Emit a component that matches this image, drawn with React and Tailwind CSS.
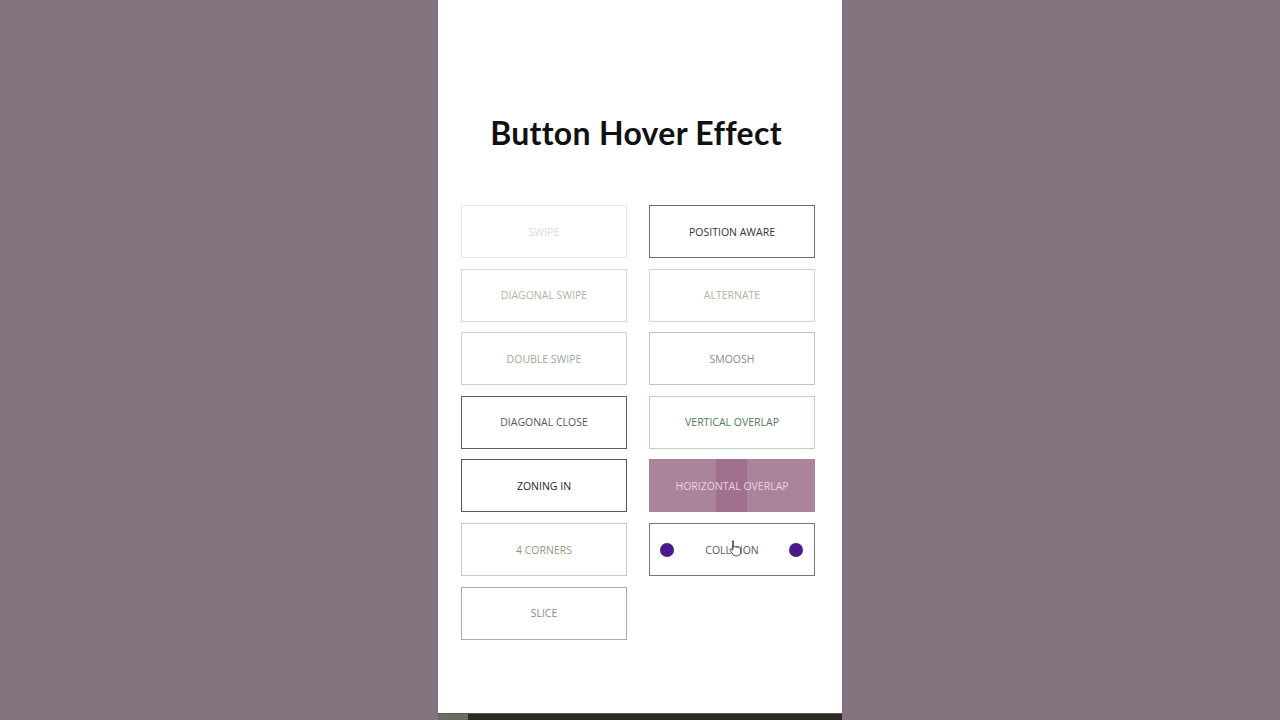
import React from "react";

const buttons = [
  { label: "SWIPE", cls: "border-[#e9e6e9] text-[#dcd8dc]" },
  { label: "POSITION AWARE", cls: "border-[#6e6e72] text-[#333336]" },
  { label: "DIAGONAL SWIPE", cls: "border-[#d6dacb] text-[#b2b3a5]" },
  { label: "ALTERNATE", cls: "border-[#d9d5c2] text-[#b7b09b]" },
  { label: "DOUBLE SWIPE", cls: "border-[#cbd6c6] text-[#9aab98]" },
  { label: "SMOOSH", cls: "border-[#bfc3c3] text-[#8a8a8a]" },
  { label: "DIAGONAL CLOSE", cls: "border-[#5a5e6a] text-[#55565f]" },
  { label: "VERTICAL OVERLAP", cls: "border-[#bcd6bc] text-[#4c7c54]" },
  { label: "ZONING IN", cls: "border-[#58585c] text-[#1e1e1e]" },
  { label: "HORIZONTAL OVERLAP", special: "overlap" },
  { label: "4 CORNERS", cls: "border-[#cbcab4] text-[#9c957a]" },
  { label: "COLLISION", special: "collision" },
  { label: "SLICE", cls: "border-[#ababab] text-[#8a8a8a]" },
];

function HandCursor() {
  return (
    <svg width="14" height="17" viewBox="0 0 14 17" className="absolute left-[78px] top-[16px]">
      <path
        d="M4 1.2c.8 0 1.3.6 1.3 1.3v5l.2-.1c.3-.6.8-.8 1.4-.8.6 0 1 .4 1.2.8.3-.4.8-.6 1.3-.5.6.1 1 .5 1.1 1 .3-.3.7-.4 1.1-.3.7.1 1.1.7 1.1 1.4v3.2c0 1.9-1.4 3.6-3.4 3.6H7.4c-1 0-1.8-.5-2.4-1.3L2.2 10.6c-.4-.5-.3-1.200.2-1.6.5-.3 1.1-.2 1.4.2l.9 1.1V2.5c0-.7.5-1.3 1.3-1.3Z"
        fill="#fff"
        stroke="#3a3a3a"
        strokeWidth="0.9"
        strokeLinejoin="round"
      />
    </svg>
  );
}

function HoverButton({ b }) {
  const base =
    "relative h-[53px] flex items-center justify-center pt-[2px] text-[10.5px] font-['Open_Sans',sans-serif]";
  if (b.special === "overlap") {
    return (
      <div className={`${base} bg-[#a9849b] overflow-hidden`}>
        <div className="absolute left-[67px] top-0 h-full w-[31px] bg-[#a0718f]" />
        <span className="relative text-[#ecd0e3]">{b.label}</span>
      </div>
    );
  }
  if (b.special === "collision") {
    return (
      <div className={`${base} border border-[#77777a] text-[#56565c] bg-white`}>
        <span className="absolute left-[10px] top-[19px] w-[14px] h-[14px] rounded-full bg-[#4b1a8c]" />
        <span className="absolute right-[11px] top-[19px] w-[14px] h-[14px] rounded-full bg-[#4b1a8c]" />
        <span>{b.label}</span>
        <HandCursor />
      </div>
    );
  }
  return <div className={`${base} border bg-white ${b.cls}`}>{b.label}</div>;
}

export default function App() {
  return (
    <div className="w-[1280px] h-[720px] bg-[#84727e] flex justify-center overflow-hidden">
      <div className="w-[404px] h-[720px] bg-white flex flex-col">
        <div className="flex-1 flex flex-col items-center pr-[4px]">
          <h1 className="mt-[113px] pr-[4px] text-[32px] leading-[40px] font-bold text-[#111] tracking-[0.3px] font-['Lato',sans-serif]">
            Button Hover Effect
          </h1>
          <div className="mt-[52px] grid grid-cols-[166px_166px] gap-x-[22px] gap-y-[10.6px]">
            {buttons.map((b) => (
              <HoverButton key={b.label} b={b} />
            ))}
          </div>
        </div>
        <div className="h-[7px] bg-[#2c2a22] border-t border-[#5a574c] flex">
          <div className="w-[30px] h-full bg-[#6b6a64]" />
        </div>
      </div>
    </div>
  );
}
